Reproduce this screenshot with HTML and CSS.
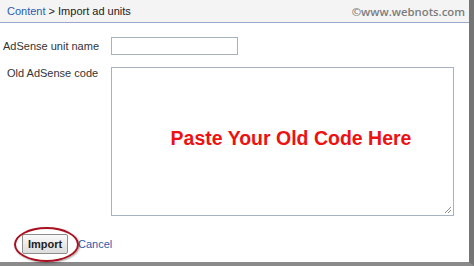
FILE: index.html
```html
<!DOCTYPE html>
<html lang="en">
<head>
    <meta charset="UTF-8">
    <title>Import ad units</title>
    <link rel="stylesheet" href="styles.css">
</head>
<body>
    <div class="shot">
        <div class="crumbs">
            <div class="trail"><a href="#" class="link">Content</a> &gt; Import ad units</div>
            <div class="mark">©www.webnots.com</div>
        </div>

        <div class="form">
            <div class="row">
                <label class="label label-name" for="unitName">AdSense unit name</label>
                <input type="text" class="name-input" id="unitName">
            </div>
            <div class="row row-code">
                <label class="label label-code">Old AdSense code</label>
                <div class="code-box">
                    <span class="hint">Paste Your Old Code Here</span>
                    <svg class="grip" width="9" height="9" viewBox="0 0 9 9">
                        <path d="M8 2 L2 8 M8 5 L5 8" stroke="#8a8a8a" stroke-width="1" fill="none"/>
                    </svg>
                </div>
            </div>
            <div class="actions">
                <span class="circled"><button class="import-button">Import</button></span>
                <a href="#" class="link cancel">Cancel</a>
            </div>
        </div>
    </div>
</body>
</html>
```

FILE: styles.css
```css
body {
    margin: 0;
    font-family: "Liberation Sans", Arial, sans-serif;
    font-size: 11px;
    color: #222;
    background-color: #fff;
}
.shot {
    width: 474px;
    height: 266px;
    box-sizing: border-box;
    border-right: 5px solid #757575;
    border-bottom: 4px solid #8a8a8a;
    background-color: #fff;
}
.crumbs {
    height: 22px;
    display: flex;
    align-items: center;
    justify-content: space-between;
    padding: 0 4px 0 7px;
    background-color: #f4f4f4;
    border-bottom: 1px solid #98a8cf;
}
.link {
    color: #2a5db0;
    text-decoration: none;
}
.trail {
    color: #222;
}
.mark {
    font-family: "Open Sans", "DejaVu Sans", sans-serif;
    font-weight: 600;
    font-size: 11.3px;
    color: #7d7d7d;
}
.form {
    padding-top: 14px;
}
.row {
    display: grid;
    grid-template-columns: 111px 1fr;
    align-items: center;
}
.row-code {
    margin-top: 12px;
    align-items: start;
}
.label {
    color: #333;
}
.label-name {
    padding-left: 3px;
}
.label-code {
    padding-left: 7px;
}
.name-input {
    width: 127px;
    height: 18px;
    box-sizing: border-box;
    margin: 0;
    border: 1px solid #a7b2c0;
    padding: 0 2px;
}
.code-box {
    position: relative;
    width: 343px;
    height: 149px;
    box-sizing: border-box;
    border: 1px solid #a7b2c0;
    display: flex;
    align-items: center;
    justify-content: center;
    padding: 0 0 6px 17px;
}
.hint {
    color: #ee1111;
    font-weight: bold;
    font-size: 19.5px;
}
.grip {
    position: absolute;
    right: 1px;
    bottom: 1px;
}
.actions {
    display: flex;
    align-items: center;
    gap: 10px;
    padding: 18px 0 0 22px;
}
.circled {
    position: relative;
    display: inline-block;
}
.circled::after {
    content: "";
    position: absolute;
    left: -8px;
    top: -7px;
    width: 61px;
    height: 31px;
    border: 2px solid #a8111f;
    border-radius: 50%;
    box-shadow: 1px 1px 2px rgba(0, 0, 0, 0.35);
}
.import-button {
    width: 46px;
    height: 20px;
    margin: 0;
    padding: 0;
    font-family: "Liberation Sans", Arial, sans-serif;
    font-size: 11px;
    font-weight: bold;
    color: #222;
    border: 1px solid #8e8e8e;
    border-radius: 2px;
    background: linear-gradient(#fafafa, #dcdcdc);
}
.cancel {
    font-size: 11px;
}
```
